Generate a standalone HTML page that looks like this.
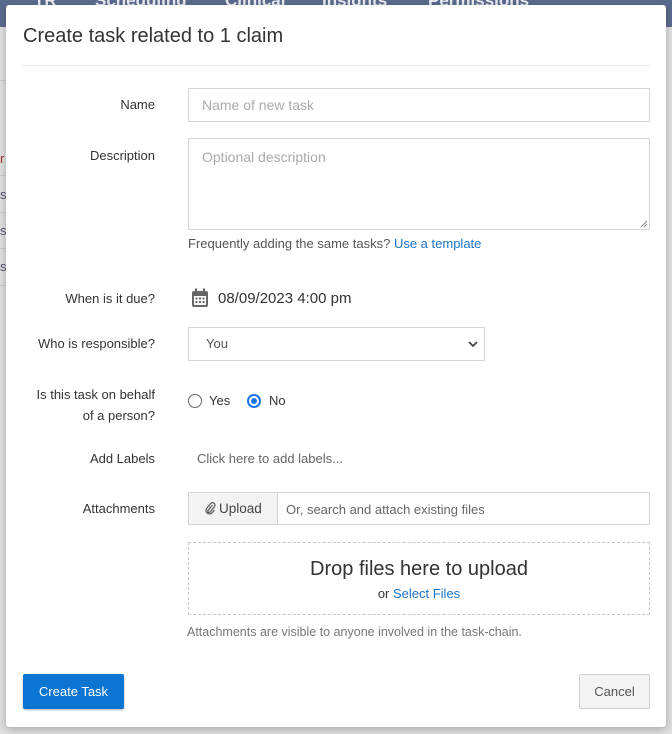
<!DOCTYPE html>
<html><head><style>
*{box-sizing:border-box;margin:0;padding:0}
body{width:672px;height:734px;overflow:hidden;background:#dedede;font-family:"Liberation Sans",sans-serif;position:relative;font-size:13px;color:#333}
.nav{position:absolute;left:0;top:0;width:672px;height:27px;background:#5a6b8c}
.nav span{position:absolute;top:-9px;color:#e8ecf3;font-size:17px;font-weight:bold}
.modal{position:absolute;left:6px;top:5px;width:660px;height:722px;background:#fff;border-radius:3px;box-shadow:0 2px 8px rgba(0,0,0,.25)}
.a{position:absolute}
.lbl{position:absolute;right:511px;text-align:right;font-size:13px;color:#333;line-height:20px}
.inp{position:absolute;left:182px;width:462px;border:1px solid #d5d5d5;background:#fff}
.ph{color:#aaa;font-size:14px}
.blue{color:#1a73c8}
.hl{position:absolute;left:0;width:6px;height:1px;background:#ccc}
</style></head><body>
<div class="nav"><span style="left:34px">TR</span><span style="left:95px">Scheduling</span><span style="left:225px">Clinical</span><span style="left:322px">Insights</span><span style="left:428px">Permissions</span></div>
<div class="hl" style="top:80px"></div><div class="hl" style="top:175px"></div><div class="hl" style="top:212px"></div><div class="hl" style="top:248px"></div><div class="hl" style="top:285px"></div>
<div class="a" style="left:0;top:151px;font-size:13px;color:#a33">r</div>
<div class="a" style="left:0;top:187px;color:#557">s/</div>
<div class="a" style="left:0;top:223px;color:#557">s/</div>
<div class="a" style="left:0;top:259px;color:#557">s/</div>
<div class="modal">
 <div class="a" style="left:17px;top:20px;font-size:20px;color:#333">Create task related to 1 claim</div>
 <div class="a" style="left:17px;top:60px;width:626px;height:1px;background:#e5e5e5"></div>

 <div class="lbl" style="top:90px">Name</div>
 <div class="inp" style="top:83px;height:34px;padding:8px 13px"><span class="ph">Name of new task</span></div>

 <div class="lbl" style="top:141px">Description</div>
 <div class="inp" style="top:133px;height:92px;padding:10px 13px"><span class="ph">Optional description</span>
  <svg class="a" style="right:1px;bottom:1px" width="8" height="8"><path d="M1 7L7 1M4 7L7 4" stroke="#888" stroke-width="1"/></svg></div>
 <div class="a" style="left:182px;top:231px;color:#555">Frequently adding the same tasks? <span class="blue">Use a template</span></div>

 <div class="lbl" style="top:284px">When is it due?</div>
 <svg class="a" style="left:185px;top:283px" width="18" height="20" viewBox="0 0 18 20"><rect x="1" y="3" width="16" height="16" rx="2" fill="#666"/><rect x="3" y="8" width="12" height="9" fill="#fff"/><rect x="4" y="0.5" width="2" height="4" fill="#666"/><rect x="12" y="0.5" width="2" height="4" fill="#666"/><g fill="#666"><rect x="4.5" y="9.5" width="2" height="2"/><rect x="8" y="9.5" width="2" height="2"/><rect x="11.5" y="9.5" width="2" height="2"/><rect x="4.5" y="13" width="2" height="2"/><rect x="8" y="13" width="2" height="2"/><rect x="11.5" y="13" width="2" height="2"/></g></svg>
 <div class="a" style="left:212px;top:285px;font-size:15px;color:#333">08/09/2023 4:00 pm</div>

 <div class="lbl" style="top:329px">Who is responsible?</div>
 <div class="inp" style="top:322px;width:297px;height:34px;padding:8px 17px;color:#555">You
  <svg class="a" style="right:6px;top:13px" width="10" height="7"><path d="M1 1L5 5L9 1" stroke="#444" stroke-width="1.8" fill="none"/></svg></div>

 <div class="lbl" style="top:379px;line-height:21px">Is this task on behalf<br>of a person?</div>
 <div class="a" style="left:182px;top:389px;width:14px;height:14px;border:1px solid #666;border-radius:50%"></div>
 <div class="a" style="left:203px;top:388px;color:#333">Yes</div>
 <div class="a" style="left:241px;top:389px;width:14px;height:14px;border:2px solid #1a73e8;border-radius:50%;padding:2px"><div style="width:6px;height:6px;background:#1a73e8;border-radius:50%"></div></div>
 <div class="a" style="left:263px;top:388px;color:#333">No</div>

 <div class="lbl" style="top:444px">Add Labels</div>
 <div class="a" style="left:191px;top:446px;color:#666">Click here to add labels...</div>

 <div class="lbl" style="top:494px">Attachments</div>
 <div class="inp" style="top:487px;height:33px"></div>
 <div class="a" style="left:182px;top:487px;width:90px;height:33px;background:#f3f3f3;border:1px solid #d5d5d5;padding:8px 0 0 16px;color:#444;font-size:13.5px">
  <svg style="vertical-align:-2px;margin-right:3px" width="11" height="13" viewBox="0 0 11 13"><path d="M7.5 3L3 8.5a1.3 1.3 0 0 0 2 1.6L9.5 4.6a2.5 2.5 0 0 0-3.8-3.2L1.6 6.5a3.5 3.5 0 0 0 5.3 4.5L9.5 8" stroke="#555" stroke-width="1.2" fill="none"/></svg>Upload</div>
 <div class="a" style="left:280px;top:497px;color:#666">Or, search and attach existing files</div>

 <div class="a" style="left:182px;top:537px;width:462px;height:73px;border:1px dashed #c8c8c8;text-align:center">
  <div style="margin-top:15px;font-size:20px;color:#333">Drop files here to upload</div>
  <div style="margin-top:5px;color:#333">or <span class="blue">Select Files</span></div>
 </div>
 <div class="a" style="left:181px;top:620px;color:#777;font-size:12.5px">Attachments are visible to anyone involved in the task-chain.</div>

 <div class="a" style="left:17px;top:669px;width:101px;height:35px;background:#0b75d1;color:#fff;border-radius:2px;box-shadow:0 1px 2px rgba(0,0,0,.3);text-align:center;line-height:35px;font-size:13px">Create Task</div>
 <div class="a" style="left:573px;top:669px;width:71px;height:35px;background:#f3f3f3;border:1px solid #d0d0d0;border-radius:2px;color:#555;text-align:center;line-height:33px">Cancel</div>
</div>
</body></html>
